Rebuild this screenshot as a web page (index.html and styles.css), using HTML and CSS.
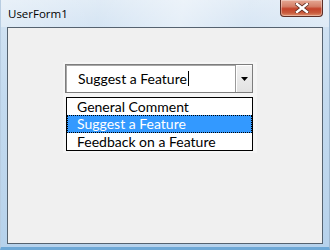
FILE: index.html
```html
<!DOCTYPE html>
<html>
<head>
<meta charset="utf-8">
<link rel="stylesheet" href="styles.css">
</head>
<body>
<div class="window">
  <div class="titlebar">
    <span class="title">UserForm1</span>
    <div class="close">
      <svg width="14" height="10" viewBox="0 0 14 10">
        <path d="M2 1 L12 9 M12 1 L2 9" stroke="#5a2a20" stroke-width="4" stroke-linecap="square"/>
        <path d="M2 1 L12 9 M12 1 L2 9" stroke="#ffffff" stroke-width="2.4" stroke-linecap="square"/>
      </svg>
    </div>
  </div>
  <div class="client">
    <div class="combo-wrap">
      <div class="combo">
        <div class="combo-text">Suggest a Feature<span class="caret"></span></div>
        <div class="combo-btn">
          <svg width="7" height="4" viewBox="0 0 7 4"><path d="M0 0 H7 L3.5 4 Z" fill="#000"/></svg>
        </div>
      </div>
      <div class="list">
        <div class="item">General Comment</div>
        <div class="item selected">Suggest a Feature</div>
        <div class="item">Feedback on a Feature</div>
      </div>
    </div>
  </div>
</div>
</body>
</html>
```

FILE: styles.css
```css
html, body {
  margin: 0;
  padding: 0;
}
body {
  width: 330px;
  height: 250px;
  overflow: hidden;
  background: #c4dbef;
}
.window {
  width: 330px;
  height: 250px;
  box-sizing: border-box;
  display: flex;
  flex-direction: column;
  background: linear-gradient(180deg, #dde9f5 0%, #cfe1f2 12%, #c3daef 40%, #bcd5ec 80%, #b6d2ec 100%);
  border-left: 1px solid #b8cde2;
  border-right: 1px solid #9fb8d0;
  border-bottom: 3px solid #6ea8d6;
  padding: 0 6px 3px 6px;
}
.titlebar {
  height: 27px;
  flex: none;
  display: flex;
  align-items: flex-start;
  justify-content: space-between;
  background: linear-gradient(100deg, rgba(255,255,255,0.35) 0%, rgba(255,255,255,0.1) 30%, rgba(255,255,255,0.45) 55%, rgba(255,255,255,0.15) 75%, rgba(255,255,255,0.3) 100%);
  margin: 0 -6px;
  padding: 0 0 0 7px;
}
.title {
  font-family: "Open Sans", "Noto Sans", sans-serif;
  font-size: 11.5px;
  color: #000;
  margin-top: 7px;
  line-height: 14px;
}
.close {
  width: 43px;
  height: 17px;
  margin-right: 6px;
  box-sizing: border-box;
  border: 1px solid #5c2e26;
  border-top: none;
  border-radius: 0 0 4px 4px;
  background: linear-gradient(180deg, #e5a894 0%, #d47f68 40%, #c4432a 55%, #c85a3c 80%, #e0916e 100%);
  display: flex;
  align-items: center;
  justify-content: center;
  box-shadow: inset 0 0 0 1px rgba(255,255,255,0.35);
}
.client {
  flex: 1;
  background: #f0f0f0;
  border: 1px solid #55626f;
  padding: 36px 0 0 57px;
}
.combo-wrap {
  width: 190px;
  padding: 2px;
  margin: -2px;
  background: #f5f5f5;
}
.combo {
  width: 188px;
  height: 29px;
  box-sizing: border-box;
  border: 1px solid #7d7d7d;
  box-shadow: inset 1px 1px 0 #a8a8a8;
  background: #fff;
  display: flex;
  align-items: stretch;
}
.combo-text {
  flex: 1;
  font-family: "Lato", "Open Sans", sans-serif;
  font-size: 14px;
  color: #000;
  padding-left: 12px;
  display: flex;
  align-items: center;
}
.caret {
  display: inline-block;
  width: 1px;
  height: 15px;
  background: #000;
  margin-left: 1px;
}
.combo-btn {
  width: 17px;
  box-sizing: border-box;
  border-left: 1px solid #9a9a9a;
  background: linear-gradient(180deg, #f2f2f2, #e2e2e2);
  box-shadow: inset 1px 1px 0 #fff;
  display: flex;
  align-items: center;
  justify-content: center;
}
.list {
  margin: 4px 0 0 1px;
  width: 187px;
  box-sizing: border-box;
  border: 1px solid #000;
  background: #fff;
}
.item {
  height: 17.33px;
  line-height: 17px;
  font-family: "Lato", "Open Sans", sans-serif;
  font-size: 14px;
  color: #000;
  padding-left: 10px;
  box-sizing: border-box;
}
.item.selected {
  background: #3399ff;
  color: #fff;
  outline: 1px dotted #000;
  outline-offset: -1px;
}
```
